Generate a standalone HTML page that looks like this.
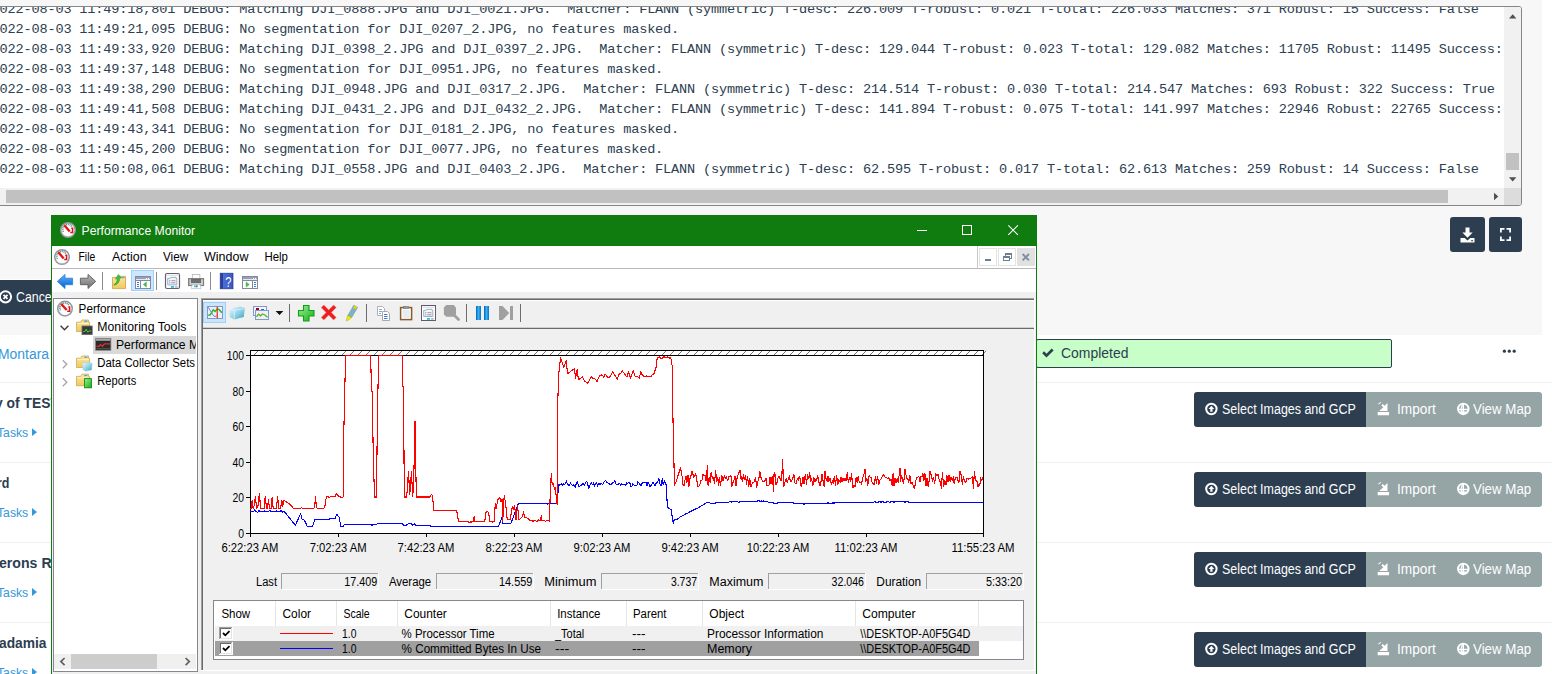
<!DOCTYPE html>
<html lang="en">
<head>
<meta charset="utf-8">
<title>WebODM - Performance Monitor</title>
<style>
html,body{margin:0;padding:0;}
body{width:1552px;height:674px;overflow:hidden;position:relative;background:#fff;font-family:"Liberation Sans",sans-serif;color:#2c3e50;}
.abs{position:absolute;}
#graybg{left:0;top:0;width:1542px;height:335px;background:#f7f7f7;}
#logbox{left:-4px;top:6px;width:1524px;height:198px;background:#fff;border:1px solid #868686;border-radius:3px;box-sizing:content-box;overflow:hidden;}
#log{position:absolute;left:-5.6px;top:-6.7px;margin:0;font-family:"Liberation Mono","DejaVu Sans Mono",monospace;font-size:13.6px;letter-spacing:-0.161px;line-height:20px;color:#2c3e50;white-space:pre;}
#vtrack{left:1507px;top:0;width:17px;height:181px;background:#f1f1f1;}
#vthumb{left:1509px;top:146px;width:13px;height:17px;background:#c1c1c1;}
#htrack{left:0;top:181px;width:1507px;height:17px;background:#f1f1f1;}
#hthumb{left:9px;top:183px;width:1442px;height:13px;background:#c1c1c1;}
#corner{left:1507px;top:181px;width:17px;height:17px;background:#dcdcdc;}
.tri{width:0;height:0;border-style:solid;}
.btn{border-radius:3px;background:#2c3e50;}
.row-line{left:0;width:1552px;height:1px;background:#ecf0f1;}
.t{position:absolute;white-space:pre;transform-origin:0 0;line-height:1;}
.lato{font-family:"Liberation Sans",sans-serif;}
.dark{background:#2c3e50;}
.gray{background:#95a5a6;}
</style>
</head>
<body>
<div id="graybg" class="abs"></div>
<div id="logbox" class="abs">
<pre id="log">2022-08-03 11:49:18,801 DEBUG: Matching DJI_0888.JPG and DJI_0021.JPG.  Matcher: FLANN (symmetric) T-desc: 226.009 T-robust: 0.021 T-total: 226.033 Matches: 371 Robust: 15 Success: False
2022-08-03 11:49:21,095 DEBUG: No segmentation for DJI_0207_2.JPG, no features masked.
2022-08-03 11:49:33,920 DEBUG: Matching DJI_0398_2.JPG and DJI_0397_2.JPG.  Matcher: FLANN (symmetric) T-desc: 129.044 T-robust: 0.023 T-total: 129.082 Matches: 11705 Robust: 11495 Success: True
2022-08-03 11:49:37,148 DEBUG: No segmentation for DJI_0951.JPG, no features masked.
2022-08-03 11:49:38,290 DEBUG: Matching DJI_0948.JPG and DJI_0317_2.JPG.  Matcher: FLANN (symmetric) T-desc: 214.514 T-robust: 0.030 T-total: 214.547 Matches: 693 Robust: 322 Success: True
2022-08-03 11:49:41,508 DEBUG: Matching DJI_0431_2.JPG and DJI_0432_2.JPG.  Matcher: FLANN (symmetric) T-desc: 141.894 T-robust: 0.075 T-total: 141.997 Matches: 22946 Robust: 22765 Success: True
2022-08-03 11:49:43,341 DEBUG: No segmentation for DJI_0181_2.JPG, no features masked.
2022-08-03 11:49:45,200 DEBUG: No segmentation for DJI_0077.JPG, no features masked.
2022-08-03 11:50:08,061 DEBUG: Matching DJI_0558.JPG and DJI_0403_2.JPG.  Matcher: FLANN (symmetric) T-desc: 62.595 T-robust: 0.017 T-total: 62.613 Matches: 259 Robust: 14 Success: False</pre>
<div id="vtrack" class="abs"></div>
<div id="vthumb" class="abs"></div>
<div id="htrack" class="abs"></div>
<div id="hthumb" class="abs"></div>
<div id="corner" class="abs"></div>
<svg class="abs" style="left:0;top:0" width="1525" height="199" viewBox="0 0 1525 199">
<path d="M1512 11.5 L1519.4 11.5 L1515.7 7.2 Z" fill="#505050"/>
<path d="M1512 170.3 L1519.4 170.3 L1515.7 174.6 Z" fill="#505050"/>
<path d="M1497 185.8 L1497 193.2 L1501.3 189.5 Z" fill="#505050"/>
</svg>
</div>

<!-- download / fullscreen buttons -->
<div class="abs btn" style="left:1450px;top:217px;width:35px;height:35px;">
<svg width="35" height="35" viewBox="0 0 35 35"><path d="M15.5 10.5h4v5h3.2l-5.2 5.2-5.2-5.2h3.2z M10.5 21h4.2l2.8 2.6 2.8-2.6h4.2v4.5h-14z" fill="#fff"/><rect x="21.3" y="23" width="1.5" height="1.3" fill="#2c3e50"/></svg>
</div>
<div class="abs btn" style="left:1489px;top:217px;width:33px;height:35px;">
<svg width="33" height="35" viewBox="0 0 33 35"><path d="M11 15.5v-4.5h4.5v1.8h-2.7v2.7z M22 15.5v-4.5h-4.5v1.8h2.7v2.7z M11 19.5v4.5h4.5v-1.8h-2.7v-2.7z M22 19.5v4.5h-4.5v-1.8h2.7v-2.7z" fill="#fff"/></svg>
</div>

<!-- cancel button (mostly hidden behind window) -->
<div class="abs" style="left:-30px;top:280px;width:90px;height:35px;background:#2c3e50;"></div>
<div class="abs" style="left:0;top:279px;width:51px;height:1px;background:#fdfdfd;"></div>
<svg class="abs" style="left:-2px;top:289px" width="16" height="16" viewBox="0 0 16 16"><circle cx="7.5" cy="7.8" r="5.6" fill="none" stroke="#fff" stroke-width="2"/><path d="M5.5 5.8l4 4M9.5 5.8l-4 4" stroke="#fff" stroke-width="1.8" fill="none"/></svg>
<span class="t" style="left:16.4px;top:289.55px;font-size:14px;font-weight:400;color:#ffffff;transform:scaleX(0.8832);">Cancel</span>

<!-- task row -->
<span class="t" style="left:-2px;top:346.75px;font-size:14px;font-weight:400;color:#3498db;transform:scaleX(0.9930);">Montara</span>
<div class="abs" style="left:1036px;top:339px;width:356px;height:29px;box-sizing:border-box;background:#c8ffc8;border:1px solid #2c3e50;border-radius:2px;"></div>
<svg class="abs" style="left:1041px;top:346px" width="14" height="14" viewBox="0 0 14 14"><path d="M1.2 7.2l1.9-1.9 2.4 2.4 5.2-5.2 1.9 1.9-7.1 7.1z" fill="#2c3e50"/></svg>
<span class="t" style="left:1060.6px;top:346.15px;font-size:14px;font-weight:400;color:#2c3e50;transform:scaleX(0.9955);">Completed</span>
<svg class="abs" style="left:1501px;top:347px" width="18" height="8" viewBox="0 0 18 8"><circle cx="3.4" cy="4.2" r="1.6" fill="#2c3e50"/><circle cx="8.3" cy="4.2" r="1.6" fill="#2c3e50"/><circle cx="13.2" cy="4.2" r="1.6" fill="#2c3e50"/></svg>

<div class="abs row-line" style="top:382px"></div>
<div class="abs row-line" style="top:462px"></div>
<div class="abs row-line" style="top:542px"></div>
<div class="abs row-line" style="top:622px"></div>
<!-- project rows -->
<span class="t" style="left:-4.6px;top:395.00px;font-size:15px;font-weight:700;color:#2c3e50;transform:scaleX(0.9252);">y of TEST</span>
<span class="t" style="left:-3.5px;top:475.10px;font-size:15px;font-weight:700;color:#2c3e50;transform:scaleX(0.8333);">rd</span>
<span class="t" style="left:-1px;top:554.70px;font-size:15px;font-weight:700;color:#2c3e50;transform:scaleX(0.9416);">erons Reef</span>
<span class="t" style="left:-1px;top:635.10px;font-size:15px;font-weight:700;color:#2c3e50;transform:scaleX(0.9187);">adamia</span>
<span class="t" style="left:-3.1px;top:425.70px;font-size:13px;font-weight:400;color:#3498db;transform:scaleX(0.9388);">Tasks</span>
<span class="t" style="left:-3.1px;top:505.50px;font-size:13px;font-weight:400;color:#3498db;transform:scaleX(0.9388);">Tasks</span>
<span class="t" style="left:-3.1px;top:585.50px;font-size:13px;font-weight:400;color:#3498db;transform:scaleX(0.9388);">Tasks</span>
<span class="t" style="left:-3.1px;top:665.50px;font-size:13px;font-weight:400;color:#3498db;transform:scaleX(0.9388);">Tasks</span>
<svg class="abs" style="left:31px;top:427px" width="8" height="260" viewBox="0 0 8 260">
<path d="M1 1.3v7.8l5-3.9z M1 81.1v7.8l5-3.9z M1 161.1v7.8l5-3.9z M1 241.1v7.8l5-3.9z" fill="#3498db"/>
</svg>
<div class="abs dark" style="left:1194px;top:392px;width:172px;height:35px;border-radius:3px 0 0 3px;"></div>
<div class="abs gray" style="left:1366px;top:392px;width:176px;height:35px;border-radius:0 3px 3px 0;"></div>
<svg class="abs" style="left:1204px;top:402px" width="16" height="16" viewBox="0 0 16 16"><circle cx="7.400" cy="7" r="5.200" fill="none" stroke="#fff" stroke-width="2"/><path d="M7.400 3.800l2.900 3.100h-1.800v2.900h-2.200v-2.900h-1.800z" fill="#fff"/></svg>
<span class="t" style="left:1222px;top:402.45px;font-size:14px;font-weight:400;color:#ffffff;transform:scaleX(0.8902);">Select Images and GCP</span>
<svg class="abs" style="left:1377px;top:401px" width="14" height="16" viewBox="0 0 14 16"><path d="M0.700 11h11.400v3.200h-11.400z M2.200 10.100h8.300v-8.100l-2.800 2.800-2 -1.700-1.300 1.300 1.900 1.800z M1.100 2.700l2.500 -1.800 0.600 0.700-2.400 1.900z" fill="#fff"/></svg>
<span class="t" style="left:1396.9px;top:402.45px;font-size:14px;font-weight:400;color:#ffffff;transform:scaleX(0.9776);">Import</span>
<svg class="abs" style="left:1456px;top:402px" width="15" height="15" viewBox="0 0 15 15"><circle cx="7.300" cy="6.900" r="5.300" fill="none" stroke="#fff" stroke-width="1.900"/><path d="M7.300 1.600v10.400M2.400 7.600h10M3.400 10.200h7.800" stroke="#fff" stroke-width="1.500" fill="none"/><path d="M7.300 2.200c-3 2.400-3 7 0 9.400" stroke="#fff" stroke-width="1.300" fill="none"/></svg>
<span class="t" style="left:1472.9px;top:402.45px;font-size:14px;font-weight:400;color:#ffffff;transform:scaleX(0.9507);">View Map</span>
<div class="abs dark" style="left:1194px;top:472px;width:172px;height:35px;border-radius:3px 0 0 3px;"></div>
<div class="abs gray" style="left:1366px;top:472px;width:176px;height:35px;border-radius:0 3px 3px 0;"></div>
<svg class="abs" style="left:1204px;top:482px" width="16" height="16" viewBox="0 0 16 16"><circle cx="7.400" cy="7" r="5.200" fill="none" stroke="#fff" stroke-width="2"/><path d="M7.400 3.800l2.900 3.100h-1.800v2.900h-2.200v-2.900h-1.800z" fill="#fff"/></svg>
<span class="t" style="left:1222px;top:482.45px;font-size:14px;font-weight:400;color:#ffffff;transform:scaleX(0.8902);">Select Images and GCP</span>
<svg class="abs" style="left:1377px;top:481px" width="14" height="16" viewBox="0 0 14 16"><path d="M0.700 11h11.400v3.200h-11.400z M2.200 10.100h8.300v-8.100l-2.800 2.800-2 -1.700-1.300 1.300 1.900 1.800z M1.100 2.700l2.500 -1.800 0.600 0.700-2.400 1.900z" fill="#fff"/></svg>
<span class="t" style="left:1396.9px;top:482.45px;font-size:14px;font-weight:400;color:#ffffff;transform:scaleX(0.9776);">Import</span>
<svg class="abs" style="left:1456px;top:482px" width="15" height="15" viewBox="0 0 15 15"><circle cx="7.300" cy="6.900" r="5.300" fill="none" stroke="#fff" stroke-width="1.900"/><path d="M7.300 1.600v10.400M2.400 7.600h10M3.400 10.200h7.800" stroke="#fff" stroke-width="1.500" fill="none"/><path d="M7.300 2.200c-3 2.400-3 7 0 9.400" stroke="#fff" stroke-width="1.300" fill="none"/></svg>
<span class="t" style="left:1472.9px;top:482.45px;font-size:14px;font-weight:400;color:#ffffff;transform:scaleX(0.9507);">View Map</span>
<div class="abs dark" style="left:1194px;top:552px;width:172px;height:35px;border-radius:3px 0 0 3px;"></div>
<div class="abs gray" style="left:1366px;top:552px;width:176px;height:35px;border-radius:0 3px 3px 0;"></div>
<svg class="abs" style="left:1204px;top:562px" width="16" height="16" viewBox="0 0 16 16"><circle cx="7.400" cy="7" r="5.200" fill="none" stroke="#fff" stroke-width="2"/><path d="M7.400 3.800l2.900 3.100h-1.800v2.900h-2.200v-2.900h-1.800z" fill="#fff"/></svg>
<span class="t" style="left:1222px;top:562.45px;font-size:14px;font-weight:400;color:#ffffff;transform:scaleX(0.8902);">Select Images and GCP</span>
<svg class="abs" style="left:1377px;top:561px" width="14" height="16" viewBox="0 0 14 16"><path d="M0.700 11h11.400v3.200h-11.400z M2.200 10.100h8.300v-8.100l-2.800 2.800-2 -1.700-1.300 1.300 1.900 1.800z M1.100 2.700l2.500 -1.800 0.600 0.700-2.400 1.900z" fill="#fff"/></svg>
<span class="t" style="left:1396.9px;top:562.45px;font-size:14px;font-weight:400;color:#ffffff;transform:scaleX(0.9776);">Import</span>
<svg class="abs" style="left:1456px;top:562px" width="15" height="15" viewBox="0 0 15 15"><circle cx="7.300" cy="6.900" r="5.300" fill="none" stroke="#fff" stroke-width="1.900"/><path d="M7.300 1.600v10.400M2.400 7.600h10M3.400 10.200h7.800" stroke="#fff" stroke-width="1.500" fill="none"/><path d="M7.300 2.200c-3 2.400-3 7 0 9.400" stroke="#fff" stroke-width="1.300" fill="none"/></svg>
<span class="t" style="left:1472.9px;top:562.45px;font-size:14px;font-weight:400;color:#ffffff;transform:scaleX(0.9507);">View Map</span>
<div class="abs dark" style="left:1194px;top:632px;width:172px;height:35px;border-radius:3px 0 0 3px;"></div>
<div class="abs gray" style="left:1366px;top:632px;width:176px;height:35px;border-radius:0 3px 3px 0;"></div>
<svg class="abs" style="left:1204px;top:642px" width="16" height="16" viewBox="0 0 16 16"><circle cx="7.400" cy="7" r="5.200" fill="none" stroke="#fff" stroke-width="2"/><path d="M7.400 3.800l2.900 3.100h-1.800v2.900h-2.200v-2.900h-1.800z" fill="#fff"/></svg>
<span class="t" style="left:1222px;top:642.45px;font-size:14px;font-weight:400;color:#ffffff;transform:scaleX(0.8902);">Select Images and GCP</span>
<svg class="abs" style="left:1377px;top:641px" width="14" height="16" viewBox="0 0 14 16"><path d="M0.700 11h11.400v3.200h-11.400z M2.200 10.100h8.300v-8.100l-2.800 2.800-2 -1.700-1.300 1.300 1.900 1.800z M1.100 2.700l2.500 -1.800 0.600 0.700-2.400 1.900z" fill="#fff"/></svg>
<span class="t" style="left:1396.9px;top:642.45px;font-size:14px;font-weight:400;color:#ffffff;transform:scaleX(0.9776);">Import</span>
<svg class="abs" style="left:1456px;top:642px" width="15" height="15" viewBox="0 0 15 15"><circle cx="7.300" cy="6.900" r="5.300" fill="none" stroke="#fff" stroke-width="1.900"/><path d="M7.300 1.600v10.400M2.400 7.600h10M3.400 10.200h7.800" stroke="#fff" stroke-width="1.500" fill="none"/><path d="M7.300 2.200c-3 2.400-3 7 0 9.400" stroke="#fff" stroke-width="1.300" fill="none"/></svg>
<span class="t" style="left:1472.9px;top:642.45px;font-size:14px;font-weight:400;color:#ffffff;transform:scaleX(0.9507);">View Map</span>
<svg class="abs" id="perfmon" style="left:51px;top:215px" width="986" height="459" viewBox="51 215 986 459" font-family="'Liberation Sans',sans-serif">
<defs>
<linearGradient id="gBlue" x1="0" y1="0" x2="0" y2="1"><stop offset="0" stop-color="#5ab8ff"/><stop offset="1" stop-color="#0a58c8"/></linearGradient>
<linearGradient id="gGray" x1="0" y1="0" x2="0" y2="1"><stop offset="0" stop-color="#b8b8b8"/><stop offset="1" stop-color="#6e6e6e"/></linearGradient>
<linearGradient id="gFolder" x1="0" y1="0" x2="0" y2="1"><stop offset="0" stop-color="#fbe7a2"/><stop offset="1" stop-color="#f0c95e"/></linearGradient>
<linearGradient id="gGreen" x1="0" y1="0" x2="1" y2="1"><stop offset="0" stop-color="#9af09a"/><stop offset="1" stop-color="#18b018"/></linearGradient>
<linearGradient id="gCube" x1="0" y1="0" x2="1" y2="1"><stop offset="0" stop-color="#f4fbff"/><stop offset="0.55" stop-color="#8fd0e6"/><stop offset="1" stop-color="#2f9fc4"/></linearGradient>
<linearGradient id="gPause" x1="0" y1="0" x2="1" y2="0"><stop offset="0" stop-color="#0b5fb4"/><stop offset="0.5" stop-color="#35b4f4"/><stop offset="1" stop-color="#0b6fc4"/></linearGradient>
<linearGradient id="gHelp" x1="0" y1="0" x2="1" y2="0"><stop offset="0" stop-color="#2a3f9c"/><stop offset="0.22" stop-color="#2a3f9c"/><stop offset="0.24" stop-color="#4a6edc"/><stop offset="1" stop-color="#3a56c0"/></linearGradient>
<g id="pmicon">
<circle cx="8" cy="8" r="7.300" fill="#ececec" stroke="#9696a0" stroke-width="1.500"/>
<circle cx="8" cy="8" r="6.100" fill="#fff"/>
<path d="M3.500 9.800A4.700 4.700 0 0 1 12 4.800" stroke="#5f9080" stroke-width="1.600" stroke-dasharray="1 0.700" fill="none"/>
<path d="M4.300 3.300L9.700 9.400" stroke="#ea1212" stroke-width="2.300" fill="none"/>
<path d="M11.300 6.300h1.300v4.300h-2.400" stroke="#d81414" stroke-width="1.500" fill="none"/>
</g>
<g id="folder">
<path d="M0.5 3.2h4.2l1.2-2.2h6.6v2.2h1v9.3h-13z" fill="url(#gFolder)" stroke="#d1a94a" stroke-width="0.8"/>
<rect x="8.2" y="1.6" width="3.2" height="1.3" fill="#5aa0e8"/>
<path d="M1 4.6h12" stroke="#fff6d0" stroke-width="0.8"/>
</g>
</defs>
<!-- frame -->
<rect x="51" y="215" width="986" height="459" fill="#f0f0f0"/>
<rect x="51" y="215" width="986" height="31" fill="#107c10"/>
<rect x="51" y="246" width="1" height="428" fill="#107c10"/>
<rect x="1036" y="246" width="1" height="428" fill="#107c10"/>
<!-- title -->
<use href="#pmicon" x="60" y="222"/>
<text x="81.6" y="235.4" font-size="12" fill="#ffffff" textLength="113.5" lengthAdjust="spacingAndGlyphs">Performance Monitor</text>
<g stroke="#fff" stroke-width="1" fill="none" shape-rendering="crispEdges">
<path d="M917 230.5h10"/>
<rect x="962.5" y="225.5" width="9" height="9"/>
</g>
<path d="M1008.3 225.3l9.6 9.6M1017.9 225.3l-9.6 9.6" stroke="#fff" stroke-width="1.1" fill="none"/>
<!-- menu bar -->
<rect x="52" y="246" width="984" height="22" fill="#fff"/>
<rect x="52" y="268" width="984" height="1" fill="#b9b9b9"/>
<rect x="977" y="246" width="1" height="22" fill="#c8c8c8"/>
<use href="#pmicon" x="54" y="249"/>
<text x="78.5" y="261.2" font-size="12" fill="#000000" textLength="16.7" lengthAdjust="spacingAndGlyphs">File</text>
<text x="112" y="261.2" font-size="12" fill="#000000" textLength="34.6" lengthAdjust="spacingAndGlyphs">Action</text>
<text x="163" y="261.2" font-size="12" fill="#000000" textLength="25.2" lengthAdjust="spacingAndGlyphs">View</text>
<text x="204" y="261.2" font-size="12" fill="#000000" textLength="44.5" lengthAdjust="spacingAndGlyphs">Window</text>
<text x="264.4" y="261.2" font-size="12" fill="#000000" textLength="23.5" lengthAdjust="spacingAndGlyphs">Help</text>
<!-- mdi buttons -->
<g shape-rendering="crispEdges">
<rect x="979.5" y="248.5" width="17" height="17" fill="#fff" stroke="#e3e3e3"/>
<rect x="998.5" y="248.5" width="17" height="17" fill="#fff" stroke="#e3e3e3"/>
<rect x="1017" y="248" width="18" height="18" fill="#e1e1e1"/>
<rect x="985" y="259" width="6" height="2" fill="#6d7f95"/>
<rect x="1005.5" y="253.5" width="6" height="5" fill="none" stroke="#6d7f95"/>
<rect x="1005" y="253" width="7" height="2" fill="#6d7f95"/>
<rect x="1003.5" y="256.500" width="6" height="4" fill="#fff" stroke="#6d7f95"/>
<rect x="1003" y="256" width="7" height="2" fill="#6d7f95"/>
</g>
<path d="M1022.6 254l6.4 6.4M1029 254l-6.4 6.400" stroke="#7d8ea3" stroke-width="1.9" fill="none"/>
<!-- toolbar -->
<rect x="52" y="269" width="984" height="23" fill="#fff"/>
<g shape-rendering="crispEdges" fill="#8d8d8d"><rect x="102" y="272" width="1" height="18"/><rect x="156" y="272" width="1" height="18"/><rect x="210" y="272" width="1" height="18"/></g>
<path d="M57.300 281.400l7.700 -7v3.800h7.600v6.500h-7.600v3.800z" fill="url(#gBlue)" stroke="#2f86e0" stroke-width="0.9" stroke-linejoin="round"/>
<path d="M95.700 281.400l-7.700 -7v3.800h-7.600v6.500h7.600v3.800z" fill="url(#gGray)" stroke="#5c5c5c" stroke-width="0.9" stroke-linejoin="round"/>
<!-- up folder -->
<path d="M112.500 277.500h4l1 -1.200h8v12.300h-13z" fill="url(#gFolder)" stroke="#c9a046" stroke-width="0.8"/>
<rect x="121.500" y="277" width="3" height="1.200" fill="#5aa0e8"/>
<path d="M113.800 284.600c2.400 -1 3.600 -3 3.400 -6l-1.700 0.500 2.900 -4.500 2.900 3.400 -1.800 0.300c0.200 3.600 -1.800 5.900 -5 6.900z" fill="#3fc23f" stroke="#1f8f1f" stroke-width="0.5"/>
<!-- show/hide tree (selected) -->
<rect x="131.500" y="270.500" width="22" height="20" fill="#cce8ff" stroke="#99d1ff" shape-rendering="crispEdges"/>
<g shape-rendering="crispEdges">
<rect x="135.500" y="276.500" width="15" height="12" fill="#fff" stroke="#8389a0"/>
<rect x="136" y="277" width="14" height="2" fill="#9a9fb4"/>
<rect x="136" y="279" width="14" height="1" fill="#e8e8f0"/>
<rect x="136" y="280" width="14" height="1" fill="#8389a0"/>
<rect x="140" y="281" width="1" height="7" fill="#8389a0"/>
<rect x="137" y="282" width="2" height="1" fill="#3a7ae0"/><rect x="137" y="284" width="2" height="1" fill="#3a7ae0"/><rect x="137" y="286" width="2" height="1" fill="#3a7ae0"/>
<rect x="146" y="277.500" width="1" height="1" fill="#fff"/><rect x="148" y="277.500" width="1" height="1" fill="#fff"/>
</g>
<path d="M143.200 284.500l3.200 -2.600v5.200z" fill="#3fc23f" stroke="#2aa02a" stroke-width="0.4"/>
<!-- properties -->
<g id="propicon">
<rect x="165.500" y="273.500" width="14" height="15" rx="1.500" fill="#fff" stroke="#62626e" stroke-width="1.200"/>
<path d="M166.500 275.200h12" stroke="#d5d8e2" stroke-width="1"/>
<path d="M167.700 278.300h2.300l0.700 -1h5.300v1h0.800v6.600h-9.100z" fill="#f3f4f8" stroke="#9ea3b8" stroke-width="0.9"/>
<rect x="169.200" y="280.200" width="1.100" height="1.100" fill="#22b0ff"/><rect x="169.200" y="282.300" width="1.100" height="1.100" fill="#8a8a9a"/>
<rect x="171.300" y="280.300" width="4.200" height="0.900" fill="#8a8fa0"/><rect x="171.300" y="282.400" width="4.200" height="0.900" fill="#8a8fa0"/>
<rect x="171" y="286" width="3" height="1.800" fill="#28c0f0"/><rect x="175" y="286" width="2.600" height="1.800" fill="#b8bac4"/>
</g>
<!-- printer -->
<rect x="192.300" y="274.500" width="7.600" height="5" fill="#fff" stroke="#b4b4b4" stroke-width="0.800"/>
<rect x="188.500" y="278.500" width="15.200" height="7.200" fill="#5a5a5a" stroke="#7a7a7a" stroke-width="0.800"/>
<rect x="189.200" y="279.200" width="2" height="5.800" fill="#c8c8c8"/><rect x="201" y="279.200" width="2" height="5.800" fill="#c8c8c8"/>
<rect x="191.200" y="279.200" width="9.800" height="3.600" fill="#6e6e6e"/>
<rect x="190.800" y="283.200" width="10.600" height="1.300" fill="#e8eef4"/>
<path d="M192.200 284.600h8l0.800 4h-9.600z" fill="#fff" stroke="#a8bcd0" stroke-width="0.700"/>
<rect x="194.300" y="285.300" width="1.300" height="2" fill="#2a8ae8"/><rect x="196" y="285.300" width="1.600" height="2" fill="#2a9a3a"/>
<!-- help -->
<rect x="220.200" y="273.200" width="12.800" height="15.600" fill="url(#gHelp)"/>
<rect x="220.200" y="273.200" width="12.800" height="15.600" fill="none" stroke="#243a8c" stroke-width="0.700"/>
<text x="225.2" y="287.2" font-size="15" fill="#ffffff" textLength="6.2" lengthAdjust="spacingAndGlyphs">?</text>
<!-- action pane -->
<g shape-rendering="crispEdges">
<rect x="242.500" y="276.500" width="15" height="12" fill="#fff" stroke="#8389a0"/>
<rect x="243" y="277" width="14" height="2" fill="#9a9fb4"/>
<rect x="243" y="279" width="14" height="1" fill="#e8e8f0"/>
<rect x="243" y="280" width="14" height="1" fill="#8389a0"/>
<rect x="252" y="281" width="1" height="7" fill="#8389a0"/>
<rect x="254" y="282" width="2" height="1" fill="#3a7ae0"/><rect x="254" y="284" width="2" height="1" fill="#3a7ae0"/><rect x="254" y="286" width="2" height="1" fill="#3a7ae0"/>
<rect x="253" y="277.500" width="1" height="1" fill="#fff"/><rect x="255" y="277.500" width="1" height="1" fill="#fff"/>
</g>
<path d="M249.300 284.500l-3.200 -2.600v5.200z" fill="#3fc23f" stroke="#2aa02a" stroke-width="0.400"/>
<!-- tree panel -->
<clipPath id="treeclip"><rect x="54" y="299" width="141.800" height="372"/></clipPath>
<rect x="53.500" y="298.500" width="144" height="373" fill="#fff" stroke="#828790" shape-rendering="crispEdges"/>
<use href="#pmicon" x="57" y="300.600"/>
<text x="78.6" y="313" font-size="12" fill="#000000" textLength="66.9" lengthAdjust="spacingAndGlyphs">Performance</text>
<path d="M60.600 325.800l3.900 3.900 3.900 -3.900" stroke="#404040" stroke-width="1.500" fill="none"/>
<use href="#folder" x="76" y="319"/>
<rect x="82" y="326" width="10.200" height="8.600" fill="#3a3a3a" stroke="#6a6a6a" stroke-width="0.800"/>
<path d="M83.200 331.500h1.800l1.200 -2.400 1.600 3.200 1.200 -1.400h2" stroke="#3fd03f" stroke-width="1" fill="none"/>
<text x="97.3" y="330.9" font-size="12" fill="#000000" textLength="89" lengthAdjust="spacingAndGlyphs">Monitoring Tools</text>
<rect x="93" y="336" width="103" height="18" fill="#d9d9d9" shape-rendering="crispEdges"/>
<rect x="95.500" y="338.300" width="15.400" height="12" fill="#2b2b2b" stroke="#8a8a8a" stroke-width="0.800"/>
<rect x="96" y="338.800" width="14.400" height="2" fill="#a8a8b0"/>
<path d="M96.500 346.400h2.500l1.500 -1.800 2 1.600 1.800 -2.400h5.700" stroke="#e03030" stroke-width="1.300" fill="none"/>
<path d="M96.500 348.600h13.500" stroke="#6a6a6a" stroke-width="0.600"/>
<g clip-path="url(#treeclip)"><text x="116" y="348.9" font-size="12" fill="#000000" textLength="113.5" lengthAdjust="spacingAndGlyphs">Performance Monitor</text></g>
<path d="M62.800 360.200l4 4 -4 4" stroke="#a6a6a6" stroke-width="1.300" fill="none"/>
<use href="#folder" x="76" y="355"/>
<path d="M82.500 363l7.500 -0.600 2.200 1.200 -0.600 6.400 -6.400 1.200 -2.300 -1.600z" fill="url(#gCube)" stroke="#9fd4e8" stroke-width="0.500"/>
<text x="97.3" y="366.8" font-size="12" fill="#000000" textLength="97.7" lengthAdjust="spacingAndGlyphs">Data Collector Sets</text>
<path d="M62.800 378.300l4 4 -4 4" stroke="#a6a6a6" stroke-width="1.300" fill="none"/>
<use href="#folder" x="76" y="373.200"/>
<rect x="84.600" y="378.600" width="6.800" height="9.200" fill="url(#gGreen)" stroke="#0c8a0c" stroke-width="0.900"/>
<text x="97.3" y="385" font-size="12" fill="#000000" textLength="38.9" lengthAdjust="spacingAndGlyphs">Reports</text>
<!-- tree h-scrollbar -->
<rect x="54" y="654" width="142" height="15" fill="#f0f0f0" shape-rendering="crispEdges"/>
<rect x="71" y="654" width="86" height="15" fill="#cdcdcd" shape-rendering="crispEdges"/>
<path d="M64.600 658l-3.700 3.600 3.700 3.600" stroke="#606060" stroke-width="1.700" fill="none"/>
<path d="M185.600 658l3.700 3.600 -3.700 3.600" stroke="#606060" stroke-width="1.700" fill="none"/>
<!-- right panel -->
<g shape-rendering="crispEdges">
<rect x="201" y="298" width="834" height="373" fill="#f0f0f0"/>
<rect x="201" y="298" width="834" height="1" fill="#a0a0a0"/>
<rect x="201" y="298" width="1" height="373" fill="#a0a0a0"/>
<rect x="202" y="299" width="832" height="1" fill="#696969"/>
<rect x="202" y="299" width="1" height="371" fill="#696969"/>
<rect x="201" y="670" width="834" height="1" fill="#fff"/>
<rect x="1034" y="298" width="1" height="373" fill="#fff"/>
<rect x="203" y="300" width="831" height="1" fill="#fff"/>
<rect x="203" y="327" width="831" height="1" fill="#cfcfcf"/>
<rect x="203" y="328" width="831" height="1" fill="#696969"/>
<rect x="289" y="304" width="1" height="18" fill="#6d6d6d"/>
<rect x="366" y="304" width="1" height="18" fill="#6d6d6d"/>
<rect x="466" y="304" width="1" height="18" fill="#6d6d6d"/>
<rect x="520" y="304" width="1" height="18" fill="#6d6d6d"/>
<!-- selected chart button -->
<rect x="203.500" y="302.500" width="22" height="20" fill="#cce4f7" stroke="#99d1ff"/>
<rect x="207.500" y="306.500" width="15" height="12" fill="#e8f0fa" stroke="#7d9bd0"/>
</g>
<path d="M208.200 307.200l5.200 8.400q1.600 1.800 3.200 0.200" stroke="#6c7fd0" stroke-width="1" fill="none"/>
<path d="M208.200 315.400l2 -0.600 3 -5 1.800 1.600 2.400 -2.600 2 1 2.400 3" stroke="#2fb02f" stroke-width="1.500" fill="none"/>
<rect x="216.600" y="306.600" width="1.300" height="11.800" fill="#e8381a"/>
<!-- cube -->
<path d="M229.300 308.400l11 -2 4.500 1.600 -1 9 -9.500 2.600 -4.600 -2.600z" fill="url(#gCube)"/>
<path d="M229.300 308.400l4.800 2 9.800 -1.800 M234.100 310.400l0.200 9" stroke="#e8f8ff" stroke-width="0.700" fill="none"/>
<!-- chart type -->
<g shape-rendering="crispEdges">
<rect x="253.500" y="306.500" width="13" height="9" fill="#f4f6fa" stroke="#7d9bd0"/>
<rect x="256" y="308" width="3" height="2" fill="#a00020"/><rect x="261" y="309" width="3" height="1" fill="#3a5aff"/>
<rect x="255.500" y="310.500" width="13" height="9" fill="#f0f0ec" stroke="#7d9bd0"/>
</g>
<path d="M256.500 316.800l2 -2.600 2 1.600 2 -1.800 2.400 1 2.600 2.200" stroke="#58b030" stroke-width="1.300" fill="none"/>
<path d="M275.600 311h7.800l-3.900 4z" fill="#111"/>
<!-- plus -->
<path d="M303.500 305.500h5.500v5h5v5.500h-5v5h-5.500v-5h-5v-5.500h5z" fill="url(#gGreen)" stroke="#10a010" stroke-width="1.100"/>
<!-- red x -->
<path d="M321.200 307.600l2.600 -2.600 4.900 4.900 4.900 -4.900 2.600 2.600 -4.900 4.900 4.900 4.900 -2.600 2.600 -4.900 -4.900 -4.900 4.900 -2.600 -2.600 4.900 -4.900z" fill="#ee1c1c" stroke="#f28a8a" stroke-width="0.500"/>
<!-- highlighter -->
<path d="M353.800 305.200l3.800 2.200 -6 10.200 -3.800 -2.200z" fill="#7fb3bd" stroke="#5e8e98" stroke-width="0.500"/>
<path d="M354.600 305.600l2.400 1.400 -1.300 2.300 -2.400 -1.400z" fill="#e8d800"/>
<path d="M347.800 315.400l3.800 2.200 -4.600 3.400 -0.800 -0.400z" fill="#f0f000" stroke="#a8a000" stroke-width="0.500"/>
<!-- copy -->
<path d="M377.500 306.500h5l2 2v7h-7z" fill="#fff" stroke="#a8a8a8" stroke-width="0.900"/>
<path d="M379 309.500h3M379 311.500h3M379 313.500h2" stroke="#5a9ae0" stroke-width="0.800"/>
<path d="M382.500 311.500h5l2 2v7h-7z" fill="#fff" stroke="#a0a0a0" stroke-width="0.900"/>
<path d="M384 314.500h3.500M384 316.500h3.500M384 318.500h3.500" stroke="#2a6ad0" stroke-width="0.900"/>
<!-- paste -->
<rect x="400.600" y="307.600" width="11" height="12" fill="#fff" stroke="#8a5a2c" stroke-width="1.500"/>
<rect x="403.500" y="306.300" width="5.200" height="2.200" fill="#9a9a9a" stroke="#6a6a6a" stroke-width="0.500"/>
<path d="M402.500 311h7.200M402.500 313h7.200M402.500 315h7.200M402.500 317h7.200" stroke="#a8c0d8" stroke-width="0.600"/>
<!-- properties 2 -->
<g shape-rendering="crispEdges"><rect x="421.500" y="305.500" width="14" height="15" fill="#fff" stroke="#5c5c6c"/></g>
<path d="M422.500 307.200h12" stroke="#d5d8e2" stroke-width="1"/>
<path d="M423.700 310.300h2.300l0.700 -1h5.300v1h0.800v6.200h-9.100z" fill="#f3f4f8" stroke="#9ea3b8" stroke-width="0.900"/>
<rect x="425.200" y="312.200" width="1.100" height="1.100" fill="#22b0ff"/><rect x="425.200" y="314.300" width="1.100" height="1.100" fill="#8a8a9a"/>
<rect x="427.300" y="312.300" width="4.200" height="0.900" fill="#8a8fa0"/><rect x="427.300" y="314.400" width="4.200" height="0.900" fill="#8a8fa0"/>
<rect x="427" y="318" width="3" height="1.800" fill="#28c0f0"/><rect x="431" y="318" width="2.600" height="1.800" fill="#b8bac4"/>
<!-- magnifier -->
<path d="M446.300 305h7.300l2.400 2.400v7l-2.400 2.400h-7.300l-2.400 -2.400v-7z" fill="#a0a0a0"/>
<path d="M453.500 314.500l5 5" stroke="#a0a0a0" stroke-width="2.800" stroke-linecap="round"/>
<!-- pause -->
<rect x="476" y="306" width="5" height="14" fill="url(#gPause)"/><rect x="484" y="306" width="5" height="14" fill="url(#gPause)"/>
<!-- next -->
<path d="M499 306h3.500l6.700 7 -6.700 7h-3.500z" fill="#a0a0a0"/><rect x="510" y="306" width="3" height="14" fill="#a0a0a0"/>
<g shape-rendering="crispEdges">
<rect x="250" y="350" width="734" height="184" fill="#fff"/>
</g>
<path d="M253.5 355.5l4.6 -4.6 M261.5 355.5l4.6 -4.6 M269.5 355.5l4.6 -4.6 M277.5 355.5l4.6 -4.6 M285.5 355.5l4.6 -4.6 M293.5 355.5l4.6 -4.6 M301.5 355.5l4.6 -4.6 M309.5 355.5l4.6 -4.6 M317.5 355.5l4.6 -4.6 M325.5 355.5l4.6 -4.6 M333.5 355.5l4.6 -4.6 M341.5 355.5l4.6 -4.6 M349.5 355.5l4.6 -4.6 M357.5 355.5l4.6 -4.6 M365.5 355.5l4.6 -4.6 M373.5 355.5l4.6 -4.6 M381.5 355.5l4.6 -4.6 M389.5 355.5l4.6 -4.6 M397.5 355.5l4.6 -4.6 M405.5 355.5l4.6 -4.6 M413.5 355.5l4.6 -4.6 M421.5 355.5l4.6 -4.6 M429.5 355.5l4.6 -4.6 M437.5 355.5l4.6 -4.6 M445.5 355.5l4.6 -4.6 M453.5 355.5l4.6 -4.6 M461.5 355.5l4.6 -4.6 M469.5 355.5l4.6 -4.6 M477.5 355.5l4.6 -4.6 M485.5 355.5l4.6 -4.6 M493.5 355.5l4.6 -4.6 M501.5 355.5l4.6 -4.6 M509.5 355.5l4.6 -4.6 M517.5 355.5l4.6 -4.6 M525.5 355.5l4.6 -4.6 M533.5 355.5l4.6 -4.6 M541.5 355.5l4.6 -4.6 M549.5 355.5l4.6 -4.6 M557.5 355.5l4.6 -4.6 M565.5 355.5l4.6 -4.6 M573.5 355.5l4.6 -4.6 M581.5 355.5l4.6 -4.6 M589.5 355.5l4.6 -4.6 M597.5 355.5l4.6 -4.6 M605.5 355.5l4.6 -4.6 M613.5 355.5l4.6 -4.6 M621.5 355.5l4.6 -4.6 M629.5 355.5l4.6 -4.6 M637.5 355.5l4.6 -4.6 M645.5 355.5l4.6 -4.6 M653.5 355.5l4.6 -4.6 M661.5 355.5l4.6 -4.6 M669.5 355.5l4.6 -4.6 M677.5 355.5l4.6 -4.6 M685.5 355.5l4.6 -4.6 M693.5 355.5l4.6 -4.6 M701.5 355.5l4.6 -4.6 M709.5 355.5l4.6 -4.6 M717.5 355.5l4.6 -4.6 M725.5 355.5l4.6 -4.6 M733.5 355.5l4.6 -4.6 M741.5 355.5l4.6 -4.6 M749.5 355.5l4.6 -4.6 M757.5 355.5l4.6 -4.6 M765.5 355.5l4.6 -4.6 M773.5 355.5l4.6 -4.6 M781.5 355.5l4.6 -4.6 M789.5 355.5l4.6 -4.6 M797.5 355.5l4.6 -4.6 M805.5 355.5l4.6 -4.6 M813.5 355.5l4.6 -4.6 M821.5 355.5l4.6 -4.6 M829.5 355.5l4.6 -4.6 M837.5 355.5l4.6 -4.6 M845.5 355.5l4.6 -4.6 M853.5 355.5l4.6 -4.6 M861.5 355.5l4.6 -4.6 M869.5 355.5l4.6 -4.6 M877.5 355.5l4.6 -4.6 M885.5 355.5l4.6 -4.6 M893.5 355.5l4.6 -4.6 M901.5 355.5l4.6 -4.6 M909.5 355.5l4.6 -4.6 M917.5 355.5l4.6 -4.6 M925.5 355.5l4.6 -4.6 M933.5 355.5l4.6 -4.6 M941.5 355.5l4.6 -4.6 M949.5 355.5l4.6 -4.6 M957.5 355.5l4.6 -4.6 M965.5 355.5l4.6 -4.6 M973.5 355.5l4.6 -4.6 M981.5 355.5l4.6 -4.6" stroke="#505050" stroke-width="0.8" fill="none"/>
<g shape-rendering="crispEdges" stroke="#000" stroke-width="1" fill="none">
<path d="M250.5 350v184 M983.5 350v187 M250 350.5h734 M246 355.5h738 M246 533.5h738"/>
<path d="M246 391.5h4 M246 426.5h4 M246 462.5h4 M246 497.5h4 M250.5 533v4 M338.5 533v4 M426.5 533v4 M514.5 533v4 M602.5 533v4 M690.5 533v4 M778.5 533v4 M866.5 533v4"/>
</g>
<polyline points="250.5,511.2 251.5,511.7 252.5,511.6 253.6,511.7 254.6,510.0 255.6,511.3 256.6,511.5 257.7,512.5 258.7,510.8 259.7,511.1 260.7,511.3 261.8,511.7 262.8,511.1 263.8,511.9 264.8,510.9 265.9,511.5 266.9,511.1 267.9,511.4 268.9,511.0 270.0,510.6 271.0,511.9 272.0,511.5 273.0,511.1 274.1,511.5 275.1,511.9 276.1,510.9 277.1,511.4 278.2,511.7 279.2,511.7 280.2,511.3 281.2,510.4 282.3,512.1 283.3,511.7 284.3,511.5 295.4,525.3 300.6,513.4 302.1,519.4 304.3,520.1 307.3,526.4 312.5,526.4 314.7,519.7 315.8,519.7 316.8,519.7 317.9,519.7 319.0,519.6 320.0,519.5 321.1,519.6 322.1,519.6 323.2,519.6 324.3,519.5 325.3,519.8 326.4,519.5 327.5,519.8 328.5,519.5 329.6,519.7 330.0,518.3 331.1,518.4 332.2,518.5 333.3,518.3 334.4,518.2 335.5,518.3 336.5,514.2 339.2,517.2 340.7,526.4 343.7,526.4 344.1,524.6 371.1,524.6 371.9,525.6 373.0,524.6 378.5,523.8 402.3,523.5 403.8,525.3 407.5,524.9 408.2,523.4 411.2,523.4 412.7,525.3 414.6,523.8 415.6,525.3 430.5,525.3 430.6,526.4 498.5,526.4 502.0,517.2 502.4,523.8 510.9,523.5 518.3,503.8 519.3,503.8 520.3,503.8 521.4,503.4 522.4,503.6 523.4,503.8 524.4,503.7 525.5,503.8 526.5,503.9 527.5,503.9 528.5,503.9 529.5,503.8 530.6,503.6 531.6,503.7 532.6,503.6 533.6,503.6 534.6,503.6 535.7,503.3 536.7,503.6 537.7,503.6 538.7,503.4 539.8,503.6 540.8,503.7 541.8,503.6 542.8,504.0 543.8,503.1 544.9,503.5 545.9,503.2 546.9,503.8 547.9,504.1 548.9,503.1 550.0,503.6 551.0,503.6 552.0,503.5 553.0,503.6 554.1,503.1 555.1,503.7 556.1,503.5 557.6,503.0 558.3,484.5 559.3,485.1 560.3,484.5 561.3,483.5 562.3,485.5 563.3,483.7 564.3,484.8 565.4,483.6 566.4,480.8 567.4,484.4 568.4,484.7 569.4,485.6 570.4,483.0 571.4,484.3 572.4,485.3 573.4,484.6 574.4,486.3 575.4,487.5 576.4,482.9 577.4,481.2 578.4,485.7 579.5,486.7 580.5,485.7 581.5,485.6 582.5,483.3 583.5,483.1 584.5,485.7 585.5,482.8 586.5,481.3 587.5,482.6 588.5,488.2 589.5,487.3 590.5,483.1 591.5,483.0 592.5,484.5 593.6,482.9 594.6,486.2 595.6,484.0 596.6,482.4 597.6,486.2 598.6,483.2 599.6,484.4 600.6,484.0 601.6,483.6 602.6,484.6 603.6,482.9 604.6,481.1 605.6,480.5 606.6,482.0 607.7,482.8 608.7,483.9 609.7,484.1 610.7,484.9 611.7,484.1 612.7,482.7 613.7,482.8 614.7,480.5 615.7,483.6 616.7,484.7 617.7,484.7 618.7,483.7 619.7,483.6 620.7,485.4 621.8,483.9 622.8,485.0 623.8,484.8 624.8,484.2 625.8,485.9 626.8,482.9 627.8,483.2 628.8,482.5 629.8,482.5 630.8,486.2 631.8,486.6 632.8,483.8 633.8,484.6 634.8,485.6 635.9,485.0 636.9,485.6 637.9,481.7 638.9,482.7 639.9,484.4 640.9,486.0 641.9,483.8 642.9,482.3 643.9,483.1 644.9,482.6 645.9,482.2 646.9,486.0 647.9,482.6 648.9,483.6 650.0,487.0 651.0,485.4 652.0,484.1 653.0,482.6 654.0,484.2 655.0,486.1 656.0,483.5 657.5,482.0 658.9,478.6 660.0,484.0 661.0,486.0 662.3,478.6 663.3,485.0 664.5,481.0 666.0,484.5 667.5,507.5 671.2,509.7 672.7,520.1 673.4,523.4 674.2,519.4 677.1,519.4 680.8,516.4 681.9,516.0 683.0,515.6 684.1,514.8 685.2,514.3 686.4,513.6 687.5,513.2 688.6,512.8 689.7,512.0 690.8,511.2 691.8,510.9 692.9,510.4 694.0,509.7 695.1,509.2 696.1,508.9 697.2,508.2 698.2,508.0 699.3,507.1 700.3,506.5 701.3,505.5 702.4,505.6 703.4,504.7 704.4,504.1 705.4,503.3 706.5,502.9 707.5,502.3 712.0,503.5 720.9,502.3 721.9,502.1 722.9,502.3 724.0,502.3 725.0,502.2 726.0,502.2 727.0,502.0 728.1,502.3 729.1,502.0 730.1,501.8 731.1,502.0 732.2,501.9 733.2,501.9 734.2,501.9 735.2,502.0 736.3,501.8 737.3,501.9 738.3,502.1 739.3,502.0 740.4,501.8 741.4,501.8 742.4,501.8 743.4,501.8 744.5,501.9 745.5,501.7 746.5,501.3 747.5,501.7 748.6,501.5 749.6,501.7 750.6,501.6 751.7,501.5 752.7,501.5 753.8,501.8 754.9,501.3 756.0,501.2 757.0,501.1 758.1,500.9 759.2,501.0 760.3,501.2 761.3,501.0 762.4,501.1 763.5,501.0 764.6,501.2 765.6,501.7 766.7,501.7 767.8,502.0 768.9,502.2 770.0,502.6 771.1,502.8 772.1,502.9 773.2,502.9 774.3,503.1 775.3,503.1 776.4,503.2 777.4,503.1 778.4,502.8 779.5,502.9 780.5,502.8 781.5,502.7 782.5,502.5 783.6,502.3 784.6,502.4 785.6,502.2 786.7,502.5 787.7,502.3 788.7,502.5 789.7,502.3 790.8,502.8 791.8,502.9 792.8,502.6 793.8,503.3 794.8,503.2 795.9,503.5 796.9,503.1 797.9,503.5 798.9,503.6 799.9,503.7 800.9,503.8 802.0,504.0 803.0,503.8 804.0,504.1 805.0,503.8 806.0,503.7 807.0,503.9 808.0,503.8 809.0,504.0 810.0,503.9 811.0,503.8 812.0,503.7 813.0,503.7 814.0,503.9 815.0,503.8 816.0,503.7 817.0,503.5 818.0,503.9 819.0,503.4 820.0,503.5 821.0,503.6 822.0,503.7 823.0,503.3 824.0,503.5 825.0,503.1 826.0,503.5 827.0,503.3 828.0,502.9 829.0,503.3 830.0,503.0 831.0,503.4 832.0,503.0 833.0,503.0 834.0,503.1 835.0,502.9 836.0,503.0 837.0,502.8 838.0,503.0 839.0,502.9 840.0,502.9 841.0,502.2 842.0,503.0 843.0,502.7 844.0,502.3 845.0,502.7 846.0,502.7 847.0,502.8 848.0,502.4 849.0,502.8 850.0,502.5 851.0,502.5 852.0,503.0 853.0,502.4 854.0,502.6 855.0,502.4 856.0,502.2 857.0,502.6 858.0,502.6 859.0,502.7 860.0,502.5 861.0,502.2 862.0,502.0 863.0,502.2 864.0,502.2 865.0,502.1 866.0,502.4 867.0,502.3 868.0,502.2 869.0,502.3 870.0,502.2 871.0,502.2 872.0,502.3 873.0,502.4 874.0,502.0 875.0,501.8 876.0,502.4 877.0,502.1 878.0,502.3 879.0,501.8 880.0,502.0 881.0,502.1 882.0,501.8 883.0,501.9 884.0,502.2 885.0,502.2 886.0,502.3 887.0,501.8 888.0,501.7 889.0,502.1 890.0,502.1 891.0,502.0 892.0,501.7 893.0,502.1 894.0,502.0 895.0,502.0 896.0,501.8 897.0,501.9 898.0,502.0 899.0,501.7 900.0,501.8 901.0,501.4 902.0,501.9 903.0,502.0 904.0,501.9 905.0,502.1 906.0,501.8 907.0,501.9 908.0,501.9 909.0,502.2 910.0,502.4 911.0,502.0 912.0,502.6 913.0,502.5 914.0,502.3 915.0,502.3 916.0,502.6 917.0,502.2 918.0,502.2 919.0,502.0 920.0,502.4 921.0,502.6 922.0,502.4 923.0,502.4 924.0,502.3 925.0,502.4 926.0,502.1 927.0,502.7 928.0,502.4 929.0,502.2 930.0,502.5 983.0,502.5" fill="none" stroke="#0000ff" stroke-width="1.1" stroke-linejoin="round" shape-rendering="crispEdges"/>
<polyline points="250.6,508.2 251.2,508.5 252.1,500.8 253.2,508.5 254.2,505.3 255.4,496.1 256.6,508.5 258.1,505.3 259.4,493.1 260.6,508.5 264.0,508.5 265.3,496.1 266.5,508.5 267.6,508.5 268.4,499.3 269.5,508.5 271.0,508.5 272.2,497.1 273.2,508.5 276.5,508.5 277.6,496.1 278.8,508.5 280.6,508.5 281.8,500.1 282.7,506.8 283.9,500.1 284.8,500.8 288.0,503.1 290.3,504.5 293.2,508.2 300.6,508.2 301.4,507.5 302.1,508.2 314.0,508.2 314.7,507.5 315.5,496.1 316.2,505.3 317.0,508.2 323.6,508.2 324.4,507.5 325.1,505.3 326.3,497.1 328.1,496.8 329.6,497.3 331.1,496.4 332.5,496.8 335.5,496.1 336.5,493.4 337.7,495.6 340.7,497.1 342.9,497.1 343.2,497.0 343.8,432.0 345.6,355.5 370.6,355.5 371.5,390.0 372.3,392.0 373.2,452.0 374.5,497.0 376.5,497.0 377.3,425.0 378.6,355.5 402.3,355.5 402.8,386.0 403.5,388.0 404.3,497.0 406.7,497.0 408.5,471.2 409.7,494.9 411.5,471.9 412.7,497.0 413.5,484.0 414.5,450.0 415.0,421.0 415.6,460.0 416.4,497.0 429.7,497.0 431.6,494.2 432.7,497.0 433.7,510.5 434.8,510.4 436.0,510.6 437.1,510.4 438.3,510.4 439.4,510.3 440.6,510.4 441.8,510.8 442.9,510.6 444.1,510.8 445.2,510.6 446.3,510.6 447.5,510.5 448.6,510.1 449.8,510.7 450.9,510.6 452.1,510.6 453.2,510.1 454.4,510.1 455.6,510.3 456.7,510.5 458.5,521.6 459.7,521.4 460.8,521.8 462.0,521.6 463.1,521.9 464.3,521.3 465.4,521.8 466.6,521.8 467.7,521.3 468.9,522.5 470.0,521.9 471.2,522.2 472.3,521.3 473.5,521.6 474.2,516.4 475.0,521.6 476.2,521.2 477.4,521.4 478.7,521.5 479.9,521.9 481.1,521.7 482.4,521.4 483.6,521.1 484.8,521.6 485.6,513.0 487.0,511.5 488.6,512.5 489.8,521.6 491.2,521.4 492.7,522.1 494.1,521.6 495.3,503.8 496.5,508.0 497.5,500.0 499.7,497.1 500.8,502.0 502.0,499.3 502.7,521.6 503.4,510.0 504.2,495.6 505.7,503.8 507.2,519.4 508.6,519.1 510.1,519.4 512.3,506.8 513.5,509.0 514.6,505.3 516.0,520.1 517.5,505.3 519.0,520.1 522.7,516.4 523.5,511.2 524.5,517.0 527.0,518.0 530.9,520.9 532.1,521.0 533.3,521.1 534.5,520.2 535.8,520.9 537.0,521.6 538.2,519.9 539.4,520.7 540.6,520.9 541.3,515.7 542.0,520.9 543.1,520.8 544.2,520.5 545.4,521.1 546.5,520.9 547.6,520.2 548.7,520.9 549.4,521.0 550.5,484.5 551.4,473.4 552.2,485.0 553.1,483.0 554.4,489.0 555.4,487.5 556.9,503.8 557.3,505.0 557.5,445.0 557.8,400.0 558.8,373.2 560.5,357.6 562.3,362.8 563.7,367.3 566.4,360.6 567.4,373.9 571.2,371.0 574.4,368.7 575.6,378.4 577.1,369.5 578.3,379.1 579.6,379.0 581.0,378.2 582.3,376.9 583.6,379.3 584.9,381.3 586.2,382.0 587.5,383.3 589.0,381.3 590.4,378.0 591.9,376.9 593.2,378.5 594.5,378.7 595.8,379.9 597.1,381.4 598.6,377.4 600.1,375.4 601.3,374.8 602.5,375.4 603.7,377.0 604.9,374.5 606.1,375.2 607.3,376.7 608.5,377.9 609.7,376.9 611.2,374.8 612.7,371.7 617.2,379.1 618.5,375.6 619.8,373.0 621.0,373.3 622.3,371.0 626.8,376.9 628.6,371.7 630.5,378.4 633.2,370.5 635.0,376.2 636.5,376.3 637.9,376.8 639.4,378.4 640.6,371.7 642.4,375.4 643.6,376.2 644.9,376.4 646.1,375.9 647.3,376.1 648.6,376.4 649.8,376.2 650.9,376.4 652.0,375.1 653.1,374.3 654.2,373.2 656.0,367.3 657.2,357.6 658.3,357.9 659.4,356.8 660.6,358.2 661.7,358.1 662.8,357.9 663.9,356.6 665.0,357.3 666.1,358.0 667.2,356.7 668.4,357.5 669.5,358.1 670.6,357.6 671.3,359.8 672.5,368.7 672.8,410.3 673.4,440.0 674.5,485.3 676.4,480.8 678.5,474.0 680.5,467.4 682.0,476.0 683.0,484.6 684.0,485.7 685.0,480.2 686.0,476.1 686.9,482.6 688.0,475.2 688.9,486.9 690.2,476.7 691.5,474.6 692.0,471.0 693.7,477.0 694.6,475.9 695.5,474.0 696.5,477.1 697.5,485.9 698.8,486.6 700.1,483.9 701.0,480.1 702.1,480.1 703.0,474.6 704.1,476.0 705.2,475.1 706.1,480.8 707.5,465.5 708.1,486.0 709.1,477.4 710.1,482.2 711.1,472.5 712.4,478.2 713.5,478.0 714.5,483.1 715.6,470.8 716.7,481.4 717.8,477.9 718.7,485.1 719.6,478.0 720.5,485.2 721.8,475.3 723.1,480.7 724.4,475.6 725.3,478.4 726.3,476.5 727.6,480.6 728.9,476.8 730.0,476.2 730.9,474.9 731.9,486.6 732.9,482.8 733.9,480.6 735.0,476.1 736.0,485.4 737.3,476.5 738.3,474.4 740.0,470.0 740.5,478.4 741.4,476.7 742.5,481.7 743.4,474.7 744.3,479.9 745.6,475.8 746.5,484.5 747.5,477.0 748.8,486.4 749.8,478.4 750.9,486.6 752.2,483.4 753.1,482.3 754.4,481.9 755.5,477.1 756.6,487.4 757.6,482.4 758.9,478.2 759.9,471.9 761.2,478.3 762.5,481.2 763.6,481.9 764.9,480.5 766.0,478.4 766.9,486.0 767.8,485.1 768.9,486.0 769.9,477.2 771.0,483.6 772.3,476.2 773.6,491.2 774.1,472.4 775.0,474.4 776.0,484.7 776.9,483.0 778.0,477.8 778.9,476.1 779.9,478.3 780.9,480.8 781.9,475.7 782.5,459.3 783.8,486.3 784.8,482.6 786.1,478.5 787.4,482.9 788.4,478.1 789.4,476.0 790.4,481.8 791.5,481.0 792.8,478.2 793.9,474.2 794.9,483.1 796.2,483.3 797.3,478.6 798.4,480.4 799.3,476.5 800.3,479.4 801.2,486.9 802.1,483.1 803.0,477.6 804.0,483.8 805.3,474.7 806.6,484.1 807.5,474.8 808.8,478.8 809.7,472.9 810.7,481.6 811.6,479.0 812.9,485.4 813.9,477.7 814.8,482.0 815.7,479.1 816.6,480.8 817.7,475.4 818.7,481.3 820.0,485.9 821.1,481.2 822.0,474.5 823.1,480.8 824.1,486.6 825.0,471.6 826.0,478.6 827.1,481.5 828.0,476.6 829.0,481.3 830.1,478.1 831.4,484.3 832.4,480.8 833.3,483.5 834.3,476.1 835.4,485.0 836.7,475.8 837.7,484.9 838.8,479.4 840.1,482.4 841.0,476.9 842.1,481.7 843.0,478.0 844.1,480.7 845.0,478.2 846.3,481.0 847.2,472.4 848.3,482.1 849.6,478.0 850.6,481.6 851.5,473.3 852.8,488.0 853.7,485.1 855.0,486.4 856.1,477.7 857.1,482.5 858.2,476.2 859.3,482.9 860.6,482.2 861.6,484.5 862.6,477.6 863.7,475.6 865.0,469.0 865.7,481.6 866.8,478.2 867.8,485.2 869.1,475.6 870.1,477.2 871.2,477.2 872.3,483.7 873.3,483.7 874.3,484.6 875.4,476.1 876.3,483.3 877.6,476.8 878.9,484.3 880.2,479.5 881.2,479.0 882.1,477.0 883.4,474.1 884.4,476.3 885.3,477.6 886.4,477.1 887.7,478.9 888.7,477.8 889.7,480.7 891.0,479.3 892.1,485.3 893.1,473.6 894.0,486.2 894.9,478.1 896.2,483.0 897.3,478.2 898.2,482.6 900.0,468.0 900.6,481.0 901.6,475.2 902.6,481.0 903.7,483.2 905.0,469.5 905.9,474.6 906.9,478.4 907.9,478.9 908.8,482.3 909.9,475.9 910.8,483.6 912.1,482.0 913.4,486.2 914.3,488.6 915.4,484.0 916.4,477.7 917.5,477.8 918.8,476.1 920.1,481.9 921.0,476.3 922.0,477.2 922.9,473.8 923.8,481.0 924.9,473.5 926.0,485.5 927.1,478.2 928.2,486.7 929.1,480.8 930.0,471.0 931.4,475.9 932.7,481.5 933.6,477.7 934.7,483.4 935.8,473.9 937.1,475.4 938.1,474.7 939.1,479.5 940.2,482.0 941.5,488.6 942.4,472.4 943.7,486.4 944.7,480.8 946.0,484.6 946.9,475.8 948.0,482.0 949.1,475.0 950.1,481.7 951.1,477.1 952.4,480.7 953.3,476.8 954.2,484.0 955.5,477.1 956.4,477.6 957.4,477.7 958.5,482.9 959.4,480.9 960.0,471.0 961.5,476.1 962.4,484.9 963.3,476.4 964.6,481.7 965.6,482.8 966.9,478.3 968.2,479.1 969.2,478.5 970.3,478.3 971.4,477.7 972.5,476.2 973.4,488.6 974.4,471.6 975.7,480.8 977.0,481.1 977.9,486.9 978.9,484.8 979.8,485.6 980.7,477.9 981.8,480.9 982.8,477.3 983.0,479.0" fill="none" stroke="#ff0000" stroke-width="1.1" stroke-linejoin="round" shape-rendering="crispEdges"/>
<!-- y labels -->
<text x="226.8" y="359.9" font-size="12" fill="#000000" textLength="17.2" lengthAdjust="spacingAndGlyphs">100</text>
<text x="232.5" y="395.5" font-size="12" fill="#000000" textLength="11.5" lengthAdjust="spacingAndGlyphs">80</text>
<text x="232.5" y="431.1" font-size="12" fill="#000000" textLength="11.5" lengthAdjust="spacingAndGlyphs">60</text>
<text x="232.5" y="466.7" font-size="12" fill="#000000" textLength="11.5" lengthAdjust="spacingAndGlyphs">40</text>
<text x="232.5" y="502.3" font-size="12" fill="#000000" textLength="11.5" lengthAdjust="spacingAndGlyphs">20</text>
<text x="238.2" y="537.9" font-size="12" fill="#000000" textLength="5.8" lengthAdjust="spacingAndGlyphs">0</text>
<!-- x labels -->
<text x="221.4" y="552.4" font-size="12" fill="#000000" textLength="56.9" lengthAdjust="spacingAndGlyphs">6:22:23 AM</text>
<text x="309.7" y="552.4" font-size="12" fill="#000000" textLength="56.9" lengthAdjust="spacingAndGlyphs">7:02:23 AM</text>
<text x="397.6" y="552.4" font-size="12" fill="#000000" textLength="56.9" lengthAdjust="spacingAndGlyphs">7:42:23 AM</text>
<text x="485.6" y="552.4" font-size="12" fill="#000000" textLength="56.9" lengthAdjust="spacingAndGlyphs">8:22:23 AM</text>
<text x="573.6" y="552.4" font-size="12" fill="#000000" textLength="56.9" lengthAdjust="spacingAndGlyphs">9:02:23 AM</text>
<text x="661.4" y="552.4" font-size="12" fill="#000000" textLength="57.4" lengthAdjust="spacingAndGlyphs">9:42:23 AM</text>
<text x="746.7" y="552.4" font-size="12" fill="#000000" textLength="62.7" lengthAdjust="spacingAndGlyphs">10:22:23 AM</text>
<text x="834.6" y="552.4" font-size="12" fill="#000000" textLength="62.8" lengthAdjust="spacingAndGlyphs">11:02:23 AM</text>
<text x="951.5" y="552.4" font-size="12" fill="#000000" textLength="63.1" lengthAdjust="spacingAndGlyphs">11:55:23 AM</text>
<!-- stats -->
<g shape-rendering="crispEdges">
<rect x="281" y="573" width="98" height="17" fill="#fff"/><rect x="281" y="573" width="97" height="16" fill="#a0a0a0"/><rect x="282" y="574" width="96" height="15" fill="#f0f0f0"/>
<rect x="436" y="573" width="98" height="17" fill="#fff"/><rect x="436" y="573" width="97" height="16" fill="#a0a0a0"/><rect x="437" y="574" width="96" height="15" fill="#f0f0f0"/>
<rect x="601" y="573" width="98" height="17" fill="#fff"/><rect x="601" y="573" width="97" height="16" fill="#a0a0a0"/><rect x="602" y="574" width="96" height="15" fill="#f0f0f0"/>
<rect x="768" y="573" width="98" height="17" fill="#fff"/><rect x="768" y="573" width="97" height="16" fill="#a0a0a0"/><rect x="769" y="574" width="96" height="15" fill="#f0f0f0"/>
<rect x="926" y="573" width="98" height="17" fill="#fff"/><rect x="926" y="573" width="97" height="16" fill="#a0a0a0"/><rect x="927" y="574" width="96" height="15" fill="#f0f0f0"/>
</g>
<text x="256" y="586.3" font-size="12" fill="#000000" textLength="21" lengthAdjust="spacingAndGlyphs">Last</text>
<text x="344.2" y="586.3" font-size="12" fill="#000000" textLength="33" lengthAdjust="spacingAndGlyphs">17.409</text>
<text x="388.9" y="586.3" font-size="12" fill="#000000" textLength="42.3" lengthAdjust="spacingAndGlyphs">Average</text>
<text x="499" y="586.3" font-size="12" fill="#000000" textLength="33.3" lengthAdjust="spacingAndGlyphs">14.559</text>
<text x="544.2" y="586.3" font-size="12" fill="#000000" textLength="52.3" lengthAdjust="spacingAndGlyphs">Minimum</text>
<text x="670.9" y="586.3" font-size="12" fill="#000000" textLength="26.1" lengthAdjust="spacingAndGlyphs">3.737</text>
<text x="709.3" y="586.3" font-size="12" fill="#000000" textLength="54.1" lengthAdjust="spacingAndGlyphs">Maximum</text>
<text x="831.6" y="586.3" font-size="12" fill="#000000" textLength="32.4" lengthAdjust="spacingAndGlyphs">32.046</text>
<text x="876.3" y="586.3" font-size="12" fill="#000000" textLength="44.9" lengthAdjust="spacingAndGlyphs">Duration</text>
<text x="985.9" y="586.3" font-size="12" fill="#000000" textLength="36.1" lengthAdjust="spacingAndGlyphs">5:33:20</text>
<!-- legend list -->
<g shape-rendering="crispEdges">
<rect x="213.500" y="600.500" width="810" height="59" fill="#fff" stroke="#828790"/>
<rect x="215" y="626" width="808" height="15" fill="#f0f0f0"/>
<rect x="215" y="641" width="764" height="15" fill="#a0a0a0"/>
<g fill="#e5e5e5">
<rect x="275" y="601" width="1" height="25"/><rect x="336" y="601" width="1" height="25"/><rect x="397" y="601" width="1" height="25"/><rect x="550" y="601" width="1" height="25"/><rect x="626" y="601" width="1" height="25"/><rect x="702" y="601" width="1" height="25"/><rect x="855" y="601" width="1" height="25"/><rect x="978" y="601" width="1" height="25"/>
</g>
<!-- checkboxes -->
<rect x="219" y="627" width="14" height="13" fill="#fff"/><rect x="219" y="627" width="13" height="12" fill="#a0a0a0"/><rect x="220" y="628" width="12" height="11" fill="#e3e3e3"/><rect x="220" y="628" width="11" height="10" fill="#696969"/><rect x="221" y="629" width="10" height="9" fill="#fff"/>
<rect x="219" y="642" width="14" height="13" fill="#fff"/><rect x="219" y="642" width="13" height="12" fill="#a0a0a0"/><rect x="220" y="643" width="12" height="11" fill="#e3e3e3"/><rect x="220" y="643" width="11" height="10" fill="#696969"/><rect x="221" y="644" width="10" height="9" fill="#fff"/>
<rect x="280" y="633" width="53" height="1" fill="#ff0000"/>
<rect x="280" y="648" width="53" height="1" fill="#0000ff"/>
</g>
<path d="M223 633l2.300 2.300 4.200 -4.200" stroke="#000" stroke-width="1.800" fill="none"/>
<path d="M223 648l2.300 2.300 4.200 -4.200" stroke="#000" stroke-width="1.800" fill="none"/>
<text x="221.4" y="618.4" font-size="12" fill="#000000" textLength="28.8" lengthAdjust="spacingAndGlyphs">Show</text>
<text x="282.5" y="618.4" font-size="12" fill="#000000" textLength="28.5" lengthAdjust="spacingAndGlyphs">Color</text>
<text x="343.4" y="618.4" font-size="12" fill="#000000" textLength="26.3" lengthAdjust="spacingAndGlyphs">Scale</text>
<text x="404.3" y="618.4" font-size="12" fill="#000000" textLength="42.5" lengthAdjust="spacingAndGlyphs">Counter</text>
<text x="557.2" y="618.4" font-size="12" fill="#000000" textLength="43.3" lengthAdjust="spacingAndGlyphs">Instance</text>
<text x="633" y="618.4" font-size="12" fill="#000000" textLength="33.5" lengthAdjust="spacingAndGlyphs">Parent</text>
<text x="709.3" y="618.4" font-size="12" fill="#000000" textLength="34.7" lengthAdjust="spacingAndGlyphs">Object</text>
<text x="862.2" y="618.4" font-size="12" fill="#000000" textLength="53.3" lengthAdjust="spacingAndGlyphs">Computer</text>
<text x="342" y="638" font-size="12" fill="#000000" textLength="14.4" lengthAdjust="spacingAndGlyphs">1.0</text>
<text x="401.6" y="638" font-size="12" fill="#000000" textLength="93" lengthAdjust="spacingAndGlyphs">% Processor Time</text>
<text x="555" y="638" font-size="12" fill="#000000" textLength="29.3" lengthAdjust="spacingAndGlyphs">_Total</text>
<text x="632" y="638" font-size="12" fill="#000000" textLength="13.7" lengthAdjust="spacingAndGlyphs">---</text>
<text x="707" y="638" font-size="12" fill="#000000" textLength="116.5" lengthAdjust="spacingAndGlyphs">Processor Information</text>
<text x="860.3" y="638" font-size="12" fill="#000000" textLength="110.2" lengthAdjust="spacingAndGlyphs">\\DESKTOP-A0F5G4D</text>
<text x="342" y="652.9" font-size="12" fill="#000000" textLength="14.4" lengthAdjust="spacingAndGlyphs">1.0</text>
<text x="401.6" y="652.9" font-size="12" fill="#000000" textLength="139.4" lengthAdjust="spacingAndGlyphs">% Committed Bytes In Use</text>
<text x="555" y="652.9" font-size="12" fill="#000000" textLength="14.4" lengthAdjust="spacingAndGlyphs">---</text>
<text x="632" y="652.9" font-size="12" fill="#000000" textLength="13.7" lengthAdjust="spacingAndGlyphs">---</text>
<text x="707" y="652.9" font-size="12" fill="#000000" textLength="45" lengthAdjust="spacingAndGlyphs">Memory</text>
<text x="860.3" y="652.9" font-size="12" fill="#000000" textLength="110.2" lengthAdjust="spacingAndGlyphs">\\DESKTOP-A0F5G4D</text>
</svg>
</body>
</html>
